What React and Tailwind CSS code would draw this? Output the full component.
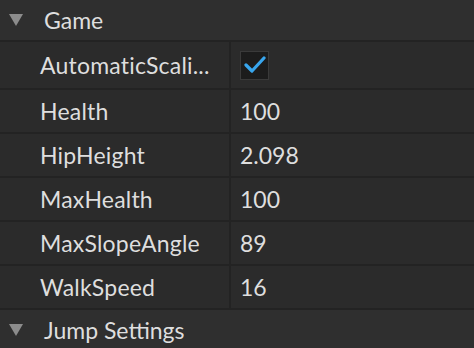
import React from "react";

const rows = [
  { name: "AutomaticScali...", value: null, tall: true },
  { name: "Health", value: "100" },
  { name: "HipHeight", value: "2.098" },
  { name: "MaxHealth", value: "100" },
  { name: "MaxSlopeAngle", value: "89" },
  { name: "WalkSpeed", value: "16" },
];

function Caret() {
  return (
    <svg width="14" height="12" viewBox="0 0 14 12" className="shrink-0">
      <path d="M0 0 L14 0 L7 12 Z" fill="#8c8c8c" />
    </svg>
  );
}

function Section({ title }) {
  return (
    <div className="flex items-center h-[42px] bg-[#2f2f2f] pl-[9px] border-b-2 border-[#232323]">
      <Caret />
      <span className="ml-[21px] text-[23px] text-[#dedede]">{title}</span>
    </div>
  );
}

export default function App() {
  return (
    <div
      className="w-[474px] h-[348px] overflow-hidden bg-[#2b2b2b]"
      style={{ fontFamily: "Lato, 'Noto Sans', sans-serif" }}
    >
      <Section title="Game" />
      {rows.map((r) => (
        <div
          key={r.name}
          className={`flex border-b-2 border-[#232323] ${r.tall ? "h-[48px]" : "h-[44px]"}`}
        >
          <div className="w-[231px] flex items-center pl-[40px] border-r-2 border-[#232323] text-[23px] text-[#dedede] tracking-[0.2px]">
            {r.name}
          </div>
          <div className="flex-1 flex items-center pl-[9px] text-[23px] text-[#dedede]">
            {r.value === null ? (
              <div className="w-[29px] h-[29px] bg-[#1c1c1c] border border-[#3a3a3a] flex items-center justify-center">
                <svg width="22" height="18" viewBox="0 0 22 18">
                  <path
                    d="M2 9 L8 15 L20 2"
                    fill="none"
                    stroke="#38a6ee"
                    strokeWidth="3.2"
                    strokeLinecap="round"
                    strokeLinejoin="round"
                  />
                </svg>
              </div>
            ) : (
              r.value
            )}
          </div>
        </div>
      ))}
      <Section title="Jump Settings" />
    </div>
  );
}
